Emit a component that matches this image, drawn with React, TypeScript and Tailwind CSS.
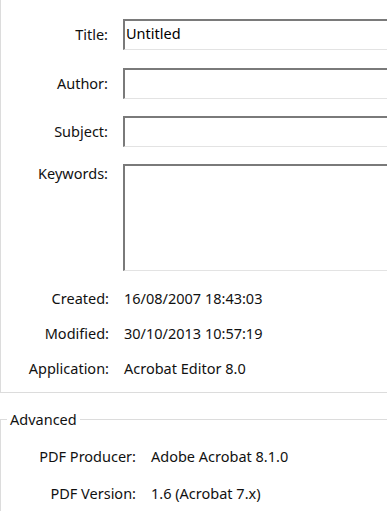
const field =
  "h-full w-[280px] border-l-2 border-t-2 border-[#7a7a7a] border-b border-b-[#e3e3e3] bg-white pl-[1px] text-[14.5px] leading-[24px] text-black outline-none";

function InputRow({ label, value, top }: { label: string; value?: string; top: string }) {
  return (
    <div className={`flex items-center h-[31px] ${top}`}>
      <div className="w-[108px] shrink-0 text-right pr-[1px]">{label}</div>
      <div className="ml-[14px] h-full shrink-0">
        <div className={field}>{value}</div>
      </div>
    </div>
  );
}

function InfoRow({ label, value, top, labelW }: { label: string; value: string; top: string; labelW: string }) {
  return (
    <div className={`flex items-center h-[20px] ${top}`}>
      <div className={`${labelW} shrink-0 text-right`}>{label}</div>
      <div className="ml-[15px] whitespace-nowrap">{value}</div>
    </div>
  );
}

export default function App() {
  return (
    <div
      className="w-[387px] h-[511px] overflow-hidden bg-white text-[14.5px] text-[#111]"
      style={{ fontFamily: '"Noto Sans", "Open Sans", sans-serif' }}
    >
      <div className="h-[393px] border-l border-b border-[#dcdcdc] pt-[19px]">
        <InputRow label="Title:" value="Untitled" top="" />
        <InputRow label="Author:" top="mt-[18px]" />
        <InputRow label="Subject:" top="mt-[17px]" />
        <div className="flex mt-[17px] h-[107px]">
          <div className="w-[108px] shrink-0 text-right pr-[1px] -mt-[1px]">Keywords:</div>
          <div className="ml-[14px] h-full shrink-0">
            <div className={field}></div>
          </div>
        </div>
        <InfoRow label="Created:" value="16/08/2007 18:43:03" top="mt-[18px]" labelW="w-[108px]" />
        <InfoRow label="Modified:" value="30/10/2013 10:57:19" top="mt-[15px]" labelW="w-[108px]" />
        <InfoRow label="Application:" value="Acrobat Editor 8.0" top="mt-[15px]" labelW="w-[108px]" />
      </div>
      <fieldset className="mt-[16px] h-[200px] border-l border-t border-[#dcdcdc] pt-[18px]">
        <legend className="ml-[6px] px-[3px] leading-[20px]">Advanced</legend>
        <InfoRow label="PDF Producer:" value="Adobe Acrobat 8.1.0" top="" labelW="w-[135px]" />
        <InfoRow label="PDF Version:" value="1.6 (Acrobat 7.x)" top="mt-[17px]" labelW="w-[135px]" />
      </fieldset>
    </div>
  );
}
